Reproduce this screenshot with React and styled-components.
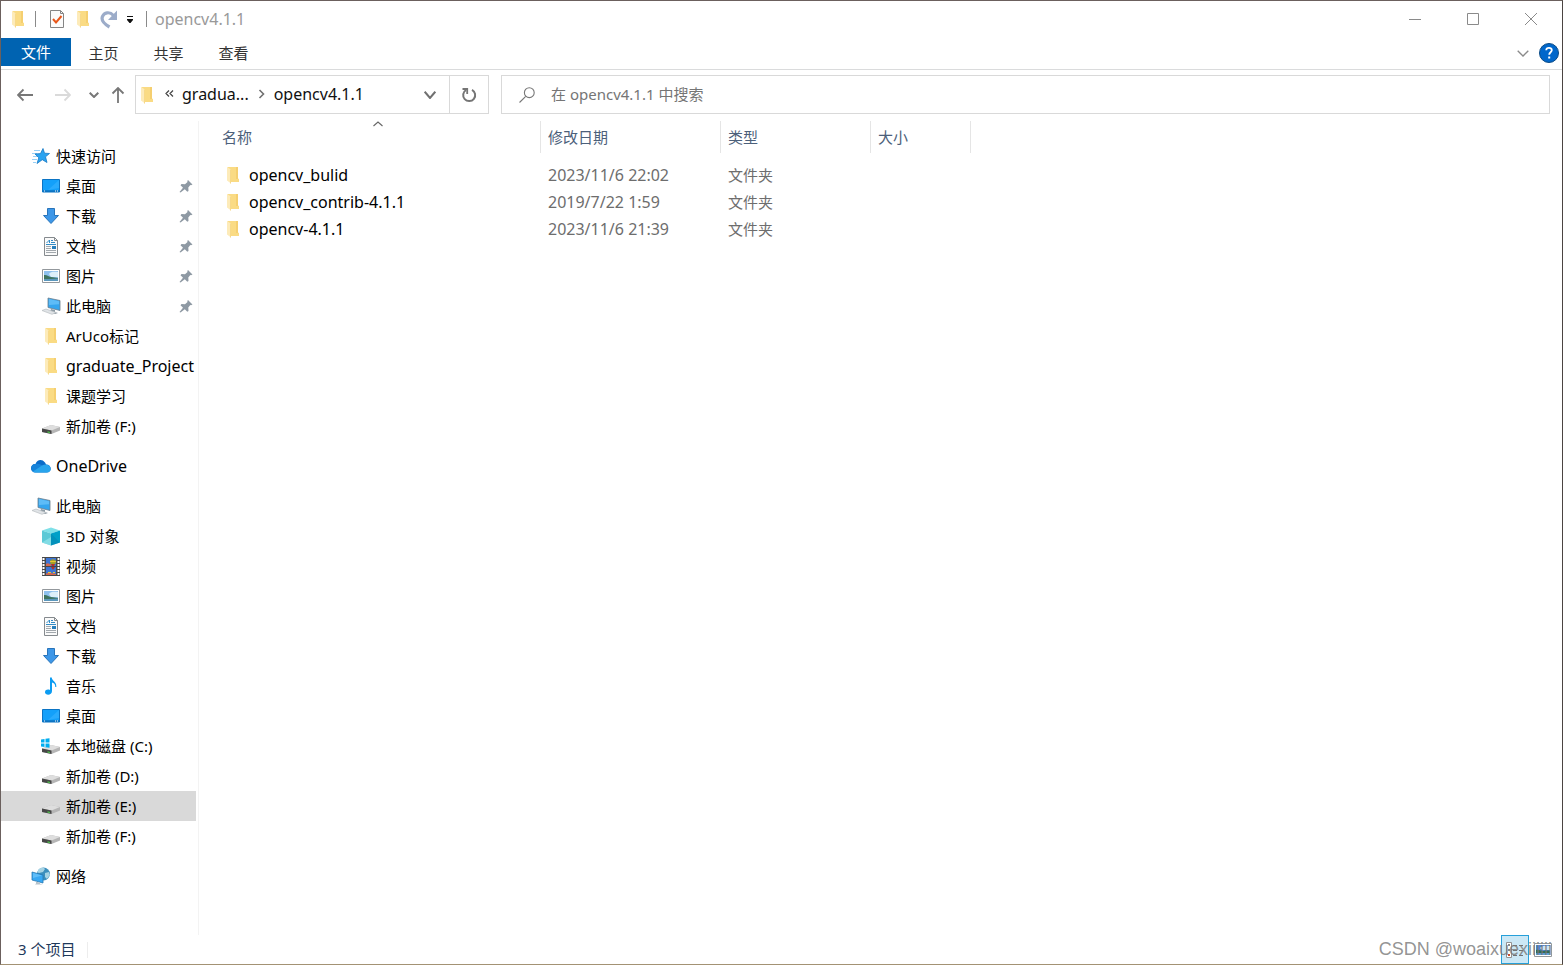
import React from 'react';
import styled, { createGlobalStyle } from 'styled-components';

const GlobalStyle = createGlobalStyle`
*{
    box-sizing:border-box;
}
body{
    margin:0;
    background:#fff;
    color:#000;
    font-family:"Noto Sans","Noto Sans CJK SC",sans-serif;
    font-size:15px;
    line-height:20px;
}
button,input{
    font:inherit;
    color:inherit;
}
svg{
    display:block;
    flex:none;
}
`;

const Window = styled.div`
display:flex;
flex-direction:column;
min-height:100vh;
background:#fff;
border:1px solid #6b605d;
border-right-color:#4b4442;
border-bottom-color:#a39274;
`;

const TitleBar = styled.header`
display:flex;
align-items:center;
height:37px;
padding:0 2px 2px 4px;
`;

const ToolButton = styled.button`
display:flex;
align-items:center;
justify-content:center;
width:${({ $narrow }) => ($narrow ? '16px' : '26px')};
height:28px;
padding:0;
border:none;
background:none;
`;

const Divider = styled.span`
width:1px;
height:16px;
margin:0 8px 0 ${({ $gap }) => $gap || '4px'};
background:${({ $light }) => ($light ? '#ededed' : '#8a8a8a')};
`;

const Title = styled.h1`
flex:1;
margin:0;
font-size:16px;
font-weight:400;
color:#999;
`;

const CaptionButton = styled(ToolButton)`
width:58px;
height:35px;
`;

const CaptionButtons = styled.div`
display:flex;
`;

const Ribbon = styled.nav`
display:flex;
align-items:flex-start;
height:32px;
border-bottom:1px solid #dadbdc;
`;

const Tab = styled.button`
width:${({ $file }) => ($file ? '70px' : '65px')};
height:${({ $file }) => ($file ? '28px' : '30px')};
padding:0;
border:none;
background:${({ $file }) => ($file ? '#0063b1' : 'none')};
color:${({ $file }) => ($file ? '#fff' : '#333')};
`;

const RibbonRight = styled.div`
display:flex;
align-items:center;
margin-left:auto;
height:30px;
`;

const AddressRow = styled.div`
display:flex;
align-items:center;
padding:5px 12px 7px 10px;
`;

const NavButton = styled(ToolButton)`
width:${({ $width }) => $width};
`;

const AddressBox = styled.div`
display:flex;
align-items:center;
width:354px;
height:39px;
border:1px solid #d9d9d9;
padding-left:4px;
`;

const Crumb = styled.a`
margin-left:${({ $gap }) => $gap};
padding-bottom:2px;
font-size:16px;
color:#111;
text-decoration:none;
white-space:nowrap;
`;

const AddressEnd = styled.div`
display:flex;
height:37px;
margin-left:auto;
`;

const AddressButton = styled.button`
display:flex;
align-items:center;
justify-content:center;
width:39px;
padding:0;
border:none;
border-left:1px solid ${({ $line }) => ($line ? '#d9d9d9' : 'transparent')};
background:none;
`;

const SearchBox = styled.label`
display:flex;
align-items:center;
flex:1;
height:39px;
margin-left:12px;
padding-left:17px;
border:1px solid #d9d9d9;
`;

const SearchInput = styled.input`
flex:1;
min-width:0;
margin-left:16px;
padding:0 0 2px;
border:none;
outline:none;
background:none;
&::placeholder{
    color:#757575;
    opacity:1;
}
`;

const Body = styled.div`
display:flex;
flex:1;
`;

const Sidebar = styled.nav`
width:198px;
flex:none;
padding:20px 2px 0 0;
border-right:1px solid #f3f3f3;
`;

const Group = styled.ul`
list-style:none;
margin:0 0 10px;
padding:0;
`;

const SideLink = styled.a`
display:flex;
align-items:center;
height:30px;
padding:0 3px 0 ${({ $root }) => ($root ? '30px' : '40px')};
background:${({ $active }) => ($active ? '#d9d9d9' : 'none')};
color:#000;
text-decoration:none;
white-space:nowrap;
`;

const SideLabel = styled.span`
flex:1;
margin-left:5px;
font-size:${({ $latin }) => ($latin ? '16px' : '15px')};
`;

const Main = styled.main`
flex:1;
min-width:0;
`;

const FileTable = styled.table`
width:100%;
table-layout:fixed;
border-collapse:collapse;
`;

const HeadCell = styled.th`
width:${({ $width }) => $width || 'auto'};
padding:0 0 8px ${({ $first }) => ($first ? '16px' : '0')};
font-weight:400;
`;

const SortButton = styled.button`
position:relative;
display:block;
width:100%;
height:32px;
padding:0 0 0 7px;
border:none;
border-right:1px solid #e5e5e5;
background:none;
color:#4c607a;
text-align:left;
`;

const SortMark = styled.span`
position:absolute;
top:0;
left:calc(50% - 5px);
`;

const Cell = styled.td`
height:27px;
padding:0 0 0 7px;
font-size:${({ $latin }) => ($latin ? '16px' : '15px')};
color:#6d6d6d;
white-space:nowrap;
`;

const FileName = styled.div`
display:flex;
align-items:center;
gap:9px;
padding-left:20px;
color:#000;
`;

const StatusBar = styled.footer`
position:relative;
display:flex;
align-items:center;
height:29px;
padding-left:17px;
color:#1e395b;
`;

const StatusText = styled.span`
padding-bottom:2px;
`;

const ViewButtons = styled.div`
display:flex;
margin-left:auto;
padding-right:5px;
`;

const ViewButton = styled.button`
display:flex;
align-items:center;
justify-content:center;
width:28px;
height:29px;
padding:0;
border:1px solid ${({ $on }) => ($on ? '#26a0da' : 'transparent')};
background:${({ $on }) => ($on ? '#cbe8f6' : 'none')};
`;

const Watermark = styled.span`
position:absolute;
right:10px;
top:4px;
font-family:"Liberation Sans",sans-serif;
font-size:18px;
color:rgba(120,120,120,0.8);
pointer-events:none;
`;

const FolderIcon = () => (
    <svg width="14" height="18" viewBox="0 0 14 18">
        <path d="M1.500 1H12v11.500l1 .5v3H4z" fill="#fadb84" />
        <path d="M10 1h2v12h-2z" fill="#f5cf70" />
        <path d="M1 1l4 2.500V17.500l-4-3z" fill="#fdebb9" />
        <path d="M4.500 3.500v14" stroke="#f7d98a" />
    </svg>
);

const CheckDocIcon = () => (
    <svg width="16" height="20" viewBox="0 0 16 20" fill="none">
        <path d="M1.500 1.500h10l3 3v14h-13z" fill="#fbfbfb" stroke="#858585" />
        <path d="M11.500 1.500v3h3" stroke="#858585" />
        <path d="M4 10l3 3.500L12.500 7" stroke="#e8571a" strokeWidth="2" />
    </svg>
);

const RedoIcon = () => (
    <svg width="18" height="20" viewBox="0 0 18 20" fill="none">
        <path d="M9.500 18C3.500 14.500 1 11 2.500 7.500c1.500-4 7-5.500 11-1" stroke="#9cacc9" strokeWidth="3.200" />
        <path d="M17 1.500v9.500H8z" fill="#9cacc9" />
    </svg>
);

const MenuCaretIcon = () => (
    <svg width="8" height="8" viewBox="0 0 8 8">
        <path d="M1 1h6v1H1zM1 4h6v1L4.500 8h-1L1 5z" fill="#111" />
    </svg>
);

const Chevron = ({ width = 10, height = 6, color = '#707070', stroke = 2, up }) => (
    <svg width={width} height={height} viewBox={`0 0 ${width} ${height}`} fill="none">
        <path
            d={up ? `M.5 ${height - 1}L${width / 2} 1l${width / 2 - .5} ${height - 2}` : `M.7.7L${width / 2} ${height - 1}L${width - .7}.7`}
            stroke={color}
            strokeWidth={stroke}
        />
    </svg>
);

const ArrowIcon = ({ color, turn = 0 }) => (
    <svg width="16" height="16" viewBox="0 0 16 16" fill="none" stroke={color} strokeWidth="1.800">
        <g transform={`rotate(${turn} 8 8)`}>
            <path d="M1 8h15M6.500 2.500L1 8l5.500 5.500" />
        </g>
    </svg>
);

const BackChevronsIcon = () => (
    <svg width="9" height="8" viewBox="0 0 9 8" fill="none" stroke="#444" strokeWidth="1.200">
        <path d="M4 .5L1 3.500l3 3M8 .5L5 3.500l3 3" />
    </svg>
);

const RefreshIcon = () => (
    <svg width="16" height="16" viewBox="0 0 16 16" fill="none" stroke="#757575" strokeWidth="2">
        <path d="M11 2.800a6 6 0 1 1-6 .2" />
        <path d="M1.500 2h4.700v5" strokeWidth="1.800" />
    </svg>
);

const SearchIcon = () => (
    <svg width="16" height="16" viewBox="0 0 16 16" fill="none" stroke="#777" strokeWidth="1.100">
        <circle cx="10.300" cy="5.700" r="4.900" />
        <path d="M6.700 9.300L.5 15.500" />
    </svg>
);

const HelpIcon = () => (
    <svg width="20" height="20" viewBox="0 0 20 20" fill="none">
        <circle cx="10" cy="10" r="9.500" fill="#0067cb" stroke="#0a4b86" />
        <path d="M7.200 7.200c.2-3.200 5.800-3 5.600.1-.1 2-2.600 2-2.600 4.500" stroke="#fff" strokeWidth="1.800" />
        <path d="M9.200 13.500h2v2h-2z" fill="#fff" />
    </svg>
);

const StarIcon = () => (
    <svg width="20" height="18" viewBox="0 0 20 18">
        <path d="M3 3.500h6M1 6.500h5M2 9.500h4M1 12.500h5M2 15.500h3" stroke="#8ccbf5" strokeWidth=".9" />
        <path d="M12 1.500l1.500 4.700 5 .3-4 3.300 1.500 5.700-4.700-2.800L6 16.500l1.800-5.700L4 7l5.500-.4z" fill="#2ba3f0" stroke="#1679c4" strokeWidth=".8" />
    </svg>
);

const DesktopIcon = () => (
    <svg width="18" height="14" viewBox="0 0 18 14">
        <path d="M.5.5h17v12.500H.5z" fill="#13a0fa" stroke="#0b74c4" />
        <path d="M17 1v8L6 11z" fill="#38b2ff" opacity=".6" />
        <path d="M1 12h16" stroke="#0b5ca5" />
        <path d="M2 12h1M13 12h1M15 12h1" stroke="#fff" />
    </svg>
);

const DownloadIcon = () => (
    <svg width="18" height="18" viewBox="0 0 18 18">
        <path d="M5.500 1.500h7v7h4L9 16.500 1.500 8.500h4z" fill="#3d97e8" stroke="#2874ba" />
    </svg>
);

const DocumentIcon = () => (
    <svg width="16" height="19" viewBox="0 0 16 19" fill="none">
        <path d="M1.500.5h10l3 3v15h-13z" fill="#fafafa" stroke="#858a8e" />
        <path d="M11.500.5v3h3" stroke="#858a8e" />
        <path d="M3.500 6l3-3v3M8 3.500h2M8 5.500h4M3 7.500h10" stroke="#328cc7" />
        <path d="M3 9.500h5M3 11.500h5M3 13.500h10M3 15.500h10" stroke="#a2a8ad" />
        <path d="M9 9h4v3H9z" fill="#267fbd" />
    </svg>
);

const PictureIcon = () => (
    <svg width="18" height="14" viewBox="0 0 18 14">
        <path d="M.5.5h17v13H.5z" fill="#fff" stroke="#93989c" />
        <path d="M2 2h14v10H2z" fill="#8fc1ee" />
        <path d="M7 5c2-3 6-2 9-2v5H9z" fill="#dceffa" />
        <path d="M2 6c3-.5 4 1.500 7 2s4 .5 7 1v1.500H2z" fill="#3e7460" />
        <path d="M2 10.500l14-1V12H2z" fill="#5a97bd" />
    </svg>
);

const ComputerIcon = () => (
    <svg width="20" height="18" viewBox="0 0 20 18">
        <path d="M7 1l12 2.500v10L7 10.500z" fill="#35a5ee" stroke="#6d7e8c" strokeWidth=".8" />
        <path d="M8 2l10 2.300v3L8 8z" fill="#70c6fb" opacity=".7" />
        <path d="M10 12l4 1v2l3 1-3 1-5-2z" fill="#8d9aa3" />
        <path d="M1 13.500l4-1.500 10 3.500-4 1.800z" fill="#e0e4e7" stroke="#b7bdc2" strokeWidth=".7" />
    </svg>
);

const DriveShape = () => (
    <>
        <path d="M0 8.500l9-3.500 9 2v3.500L9.500 14 0 12z" fill="#b5b5b5" />
        <path d="M0 8.500l9-3.500 9 2-8.500 3.500z" fill="#dedede" />
        <path d="M0 8.500l9.500 2V14L0 12z" fill="#474747" />
        <path d="M5.500 11.300l2.500.6v1.200l-2.500-.6z" fill="#4fd64c" />
    </>
);

const DriveIcon = () => (
    <svg width="18" height="18" viewBox="0 -3 18 18">
        <DriveShape />
    </svg>
);

const SystemDriveIcon = () => (
    <svg width="20" height="18" viewBox="0 0 20 18">
        <g transform="translate(1 3)"><DriveShape /></g>
        <path d="M0 2.500l3.500-.5v3.500H0zM4.500 1.800l4-.6v4.300h-4zM0 6.500h3.500V10L0 9.500zM4.500 6.500h4v4.300l-4-.6z" fill="#00adef" />
    </svg>
);

const CloudIcon = () => (
    <svg width="20" height="14" viewBox="0 0 20 14">
        <path d="M4.500 5C6 .5 11-.5 14 3.500c.5.700.8 1.500 1 2 6 0 6.500 8 .5 8H4.500C-1.500 13.500-1.500 5 4.500 5z" fill="#0a6bc8" />
        <path d="M4.500 5c3-1 5.500.5 7 1.500L3 13C-1 12-1 5 4.500 5z" fill="#1683da" />
        <path d="M11 6.500c2-1 4-1.500 6-.5 4 2 3.500 7.500-1.500 7.500H4.500c-1 0-2-.5-2.500-1z" fill="#28a4ec" />
    </svg>
);

const CubeIcon = () => (
    <svg width="18" height="19" viewBox="0 0 18 19">
        <path d="M0 3.500L9 .5l9 3-9 3z" fill="#7fe0e8" />
        <path d="M0 3.500l9 3v12l-9-3z" fill="#5cc9d6" />
        <path d="M18 3.500l-9 3v12l9-3z" fill="#00a0c8" />
        <path d="M0 15.500L9 10v8.500z" fill="#9ce9ee" opacity=".6" />
        <path d="M9 6.500l9 9-9 3z" fill="#0682ae" opacity=".5" />
    </svg>
);

const VideoIcon = () => (
    <svg width="18" height="19" viewBox="0 0 18 19">
        <path d="M0 0h18v19H0z" fill="#46484a" />
        <path d="M1.500 1v18M16.500 1v18" stroke="#fff" strokeWidth="2" strokeDasharray="2 1" />
        <path d="M4 1h10v8H4zM4 10h10v8H4z" fill="#3d75d4" />
        <path d="M4 7c3-2 3 1 5 0v2H4zM4 17c2-2 3 0 5-1l5 1v1H4z" fill="#d8674b" />
        <circle cx="11" cy="5" r="2.800" fill="#a5a028" />
        <path d="M9 7h4l-1 2h-2zM9 10h4l-2 3z" fill="#b62e27" />
        <path d="M8 4h6v1H8zM6 15h3v1H6zM11 15h2v1h-2z" fill="#e8c634" />
    </svg>
);

const MusicIcon = () => (
    <svg width="14" height="18" viewBox="0 0 14 18">
        <path d="M6 .5h1.800c0 3.500 5 3.800 4.500 9.500h-1c0-3-1.500-4-3.300-4.500V14c0 5-7.500 4.500-7 1 .3-2.500 3-3 5-2z" fill="#0c9cf2" />
    </svg>
);

const NetworkIcon = () => (
    <svg width="20" height="18" viewBox="0 0 20 18">
        <circle cx="12.500" cy="7" r="6.500" fill="#3c8fbd" />
        <path d="M8 2c3-2 5-1 6 0l-2 3-4 1-2-1zM14 6l4-1 1 3-3 4-2-2z" fill="#a6d3e4" />
        <path d="M1 5l11 3v8L1 13z" fill="#38a8f3" stroke="#2678b3" strokeWidth=".8" />
        <path d="M2 6l9 2.500L2 11z" fill="#71c8fb" opacity=".7" />
        <path d="M5 14.500l4 1.200v1l3 .8H4l1-1z" fill="#b6c2ca" />
    </svg>
);

const PinIcon = () => (
    <svg width="14" height="14" viewBox="0 0 14 14">
        <path d="M9 1l4.500 4.500-1.500.7-.7-.2-2 2.500.2 3.500-1.200.8-2.500-2.500L1.500 13.500.5 13 4 8.700 1.500 6.200l1-1.200 3.500.3L8.500 3l-.2-1z" fill="#8e99a3" />
    </svg>
);

const DetailsIcon = () => (
    <svg width="18" height="16" viewBox="0 0 18 16">
        <path d="M.5.5h5v15h-5z" fill="#fff" stroke="#929292" />
        <path d="M2 2h2v2H2zM2 7h2v2H2z" fill="#8a8a8a" />
        <path d="M2 12h2v2H2z" fill="#cc4b29" />
        <path d="M7 3.500h4M7 8.500h4M7 13.500h4M13 3.500h4M13 8.500h4M13 13.500h4" stroke="#727272" />
    </svg>
);

const LargeIconsIcon = () => (
    <svg width="18" height="14" viewBox="0 0 18 14">
        <path d="M.5.5h17v13H.5z" fill="#fff" stroke="#93989c" />
        <path d="M2 2h14v10H2z" fill="#4a86d8" />
        <path d="M6 5c3-3 6-2 10-2v4H8z" fill="#cfe6fa" />
        <path d="M2 7c3-1 5 1 7 1s4-1 7 0v2H2z" fill="#2f6b55" />
        <path d="M2 10.500l14-.5v2H2z" fill="#5aa0d8" />
    </svg>
);

const places = {
    desktop: { label: '桌面', icon: DesktopIcon },
    downloads: { label: '下载', icon: DownloadIcon },
    documents: { label: '文档', icon: DocumentIcon },
    pictures: { label: '图片', icon: PictureIcon },
    computer: { label: '此电脑', icon: ComputerIcon },
};

const groups = [
    [
        { label: '快速访问', icon: StarIcon, root: true },
        { ...places.desktop, pinned: true },
        { ...places.downloads, pinned: true },
        { ...places.documents, pinned: true },
        { ...places.pictures, pinned: true },
        { ...places.computer, pinned: true },
        { label: 'ArUco标记', icon: FolderIcon },
        { label: 'graduate_Project', icon: FolderIcon, latin: true },
        { label: '课题学习', icon: FolderIcon },
        { label: '新加卷 (F:)', icon: DriveIcon },
    ],
    [{ label: 'OneDrive', icon: CloudIcon, root: true, latin: true }],
    [
        { ...places.computer, root: true },
        { label: '3D 对象', icon: CubeIcon },
        { label: '视频', icon: VideoIcon },
        places.pictures,
        places.documents,
        places.downloads,
        { label: '音乐', icon: MusicIcon },
        places.desktop,
        { label: '本地磁盘 (C:)', icon: SystemDriveIcon },
        { label: '新加卷 (D:)', icon: DriveIcon },
        { label: '新加卷 (E:)', icon: DriveIcon, active: true },
        { label: '新加卷 (F:)', icon: DriveIcon },
    ],
    [{ label: '网络', icon: NetworkIcon, root: true }],
];

const columns = [
    { label: '名称', width: '342px', sorted: true },
    { label: '修改日期', width: '180px' },
    { label: '类型', width: '150px' },
    { label: '大小', width: '100px' },
];

const files = [
    { name: 'opencv_bulid', date: '2023/11/6 22:02', type: '文件夹' },
    { name: 'opencv_contrib-4.1.1', date: '2019/7/22 1:59', type: '文件夹' },
    { name: 'opencv-4.1.1', date: '2023/11/6 21:39', type: '文件夹' },
];

const IconSlot = styled.span`
display:flex;
align-items:center;
justify-content:center;
width:20px;
flex:none;
`;

const SideItem = ({ item }) => {
    const Icon = item.icon;
    return (
        <li>
            <SideLink href="#" $root={item.root} $active={item.active}>
                <IconSlot><Icon /></IconSlot>
                <SideLabel $latin={item.latin}>{item.label}</SideLabel>
                {item.pinned && <PinIcon />}
            </SideLink>
        </li>
    )
}

const App = () => {
    return (
        <>
            <GlobalStyle />
            <Window>
                <TitleBar>
                    <ToolButton aria-label="窗口"><FolderIcon /></ToolButton>
                    <Divider />
                    <ToolButton aria-label="属性"><CheckDocIcon /></ToolButton>
                    <ToolButton aria-label="新建文件夹"><FolderIcon /></ToolButton>
                    <ToolButton aria-label="恢复"><RedoIcon /></ToolButton>
                    <ToolButton $narrow aria-label="自定义"><MenuCaretIcon /></ToolButton>
                    <Divider $gap="8px" />
                    <Title>opencv4.1.1</Title>
                    <CaptionButtons>
                        <CaptionButton aria-label="最小化">
                            <svg width="12" height="12"><path d="M0 6.500h12" stroke="#8a8a8a" /></svg>
                        </CaptionButton>
                        <CaptionButton aria-label="最大化">
                            <svg width="12" height="12"><path d="M.5.5h11v11H.5z" fill="none" stroke="#8a8a8a" /></svg>
                        </CaptionButton>
                        <CaptionButton aria-label="关闭">
                            <svg width="12" height="12"><path d="M0 0l12 12M12 0L0 12" stroke="#8a8a8a" /></svg>
                        </CaptionButton>
                    </CaptionButtons>
                </TitleBar>
                <Ribbon>
                    <Tab $file>文件</Tab>
                    <Tab>主页</Tab>
                    <Tab>共享</Tab>
                    <Tab>查看</Tab>
                    <RibbonRight>
                        <ToolButton aria-label="展开功能区"><Chevron width={12} height={7} color="#8a8a8a" stroke={1.3} /></ToolButton>
                        <ToolButton aria-label="帮助"><HelpIcon /></ToolButton>
                    </RibbonRight>
                </Ribbon>
                <AddressRow>
                    <NavButton $width="28px" aria-label="后退"><ArrowIcon color="#777" /></NavButton>
                    <NavButton $width="48px" aria-label="前进"><ArrowIcon color="#dadada" turn={180} /></NavButton>
                    <NavButton $width="14px" aria-label="最近位置"><Chevron color="#777" /></NavButton>
                    <NavButton $width="34px" aria-label="上移"><ArrowIcon color="#777" turn={90} /></NavButton>
                    <AddressBox>
                        <FolderIcon />
                        <Crumb href="#" $gap="11px" aria-label="上级文件夹"><BackChevronsIcon /></Crumb>
                        <Crumb href="#" $gap="8px">gradua...</Crumb>
                        <Crumb as="span" $gap="9px">
                            <svg width="8" height="10" fill="none"><path d="M1.500 1L5.500 5l-4 4" stroke="#707070" strokeWidth="1.600" /></svg>
                        </Crumb>
                        <Crumb href="#" $gap="8px">opencv4.1.1</Crumb>
                        <AddressEnd>
                            <AddressButton aria-label="历史"><Chevron width={12} height={8} /></AddressButton>
                            <AddressButton $line aria-label="刷新"><RefreshIcon /></AddressButton>
                        </AddressEnd>
                    </AddressBox>
                    <SearchBox>
                        <SearchIcon />
                        <SearchInput aria-label="搜索" placeholder="在 opencv4.1.1 中搜索" />
                    </SearchBox>
                </AddressRow>
                <Body>
                    <Sidebar>
                        {
                            groups.map((group, index) => (
                                <Group key={index}>
                                    {group.map((item, i) => <SideItem key={i} item={item} />)}
                                </Group>
                            ))
                        }
                    </Sidebar>
                    <Main>
                        <FileTable>
                            <thead>
                                <tr>
                                    {
                                        columns.map((column) => (
                                            <HeadCell key={column.label} $width={column.width} $first={column.sorted}>
                                                <SortButton>
                                                    {column.label}
                                                    {column.sorted && <SortMark><Chevron up color="#666" stroke={1.1} /></SortMark>}
                                                </SortButton>
                                            </HeadCell>
                                        ))
                                    }
                                    <HeadCell as="td" />
                                </tr>
                            </thead>
                            <tbody>
                                {
                                    files.map((file) => (
                                        <tr key={file.name}>
                                            <Cell $latin><FileName><FolderIcon />{file.name}</FileName></Cell>
                                            <Cell $latin>{file.date}</Cell>
                                            <Cell>{file.type}</Cell>
                                            <Cell />
                                            <Cell />
                                        </tr>
                                    ))
                                }
                            </tbody>
                        </FileTable>
                    </Main>
                </Body>
                <StatusBar>
                    <StatusText>3 个项目</StatusText>
                    <Divider $light $gap="12px" />
                    <ViewButtons>
                        <ViewButton $on aria-label="详细信息"><DetailsIcon /></ViewButton>
                        <ViewButton aria-label="大图标"><LargeIconsIcon /></ViewButton>
                    </ViewButtons>
                    <Watermark>CSDN @woaixuexiiiiii</Watermark>
                </StatusBar>
            </Window>
        </>
    )
}

export default App;
